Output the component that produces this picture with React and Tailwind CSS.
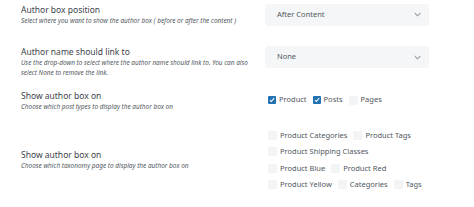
import React from 'react';

function Chevron() {
  return (
    <svg width="7" height="5" viewBox="0 0 10 6" fill="none" stroke="#646970" strokeWidth="1.4">
      <path d="M1 1l4 4 4-4" />
    </svg>
  );
}

function Select({ value }) {
  return (
    <div className="flex h-[22px] w-[164px] items-center justify-between rounded-[3px] bg-[#f5f6f8] pl-[12px] pr-[8px] text-[7.5px] text-[#50575e]">
      <span>{value}</span>
      <Chevron />
    </div>
  );
}

function Check({ label, checked }) {
  return (
    <label className="flex items-center gap-[3px] text-[7.5px] text-[#50575e]">
      {checked ? (
        <span className="flex h-[8px] w-[8px] items-center justify-center rounded-[1px] bg-[#2271b1]">
          <svg width="6" height="6" viewBox="0 0 10 10" fill="none" stroke="white" strokeWidth="1.8">
            <path d="M1.5 5.2l2.4 2.4L8.6 2" />
          </svg>
        </span>
      ) : (
        <span className="h-[9px] w-[9px] rounded-[1px] bg-[#f3f4f6]" />
      )}
      <span>{label}</span>
    </label>
  );
}

function Label({ title, desc }) {
  return (
    <div className="pr-[2px]">
      <h3 className="text-[8.5px] leading-[11px] font-normal text-[#3c434a]">{title}</h3>
      <p className="mt-[1px] text-[6.45px] leading-[10px] italic text-[#50575e]">{desc}</p>
    </div>
  );
}

export default function App() {
  return (
    <div className="h-[207px] w-[474px] overflow-hidden bg-white pl-[21px] font-['Noto_Sans',sans-serif]">
      <div className="grid grid-cols-[244px_1fr] items-center pt-[3px]">
        <div className="pt-[1px]">
          <Label
            title="Author box position"
            desc="Select where you want to show the author box ( before or after the content )"
          />
        </div>
        <Select value="After Content" />
      </div>

      <div className="mt-[20px] grid grid-cols-[244px_1fr] items-start">
        <Label
          title="Author name should link to"
          desc="Use the drop-down to select where the author name should link to. You can also select None to remove the link."
        />
        <Select value="None" />
      </div>

      <div className="mt-[12px] grid grid-cols-[244px_1fr] items-center">
        <Label title="Show author box on" desc="Choose which post types to display the author box on" />
        <div className="flex items-center gap-[6px] pb-[2px] pl-[3px]">
          <Check label="Product" checked />
          <Check label="Posts" checked />
          <Check label="Pages" />
        </div>
      </div>

      <div className="mt-[18px] grid grid-cols-[244px_1fr] items-center">
        <Label title="Show author box on" desc="Choose which taxonomy page to display the author box on" />
        <div className="flex flex-col gap-[5px] pl-[3px]">
          <div className="flex items-center gap-[6px]">
            <Check label="Product Categories" />
            <Check label="Product Tags" />
          </div>
          <div className="flex items-center gap-[6px]">
            <Check label="Product Shipping Classes" />
          </div>
          <div className="flex items-center gap-[6px]">
            <Check label="Product Blue" />
            <Check label="Product Red" />
          </div>
          <div className="flex items-center gap-[6px]">
            <Check label="Product Yellow" />
            <Check label="Categories" />
            <Check label="Tags" />
          </div>
        </div>
      </div>
    </div>
  );
}
